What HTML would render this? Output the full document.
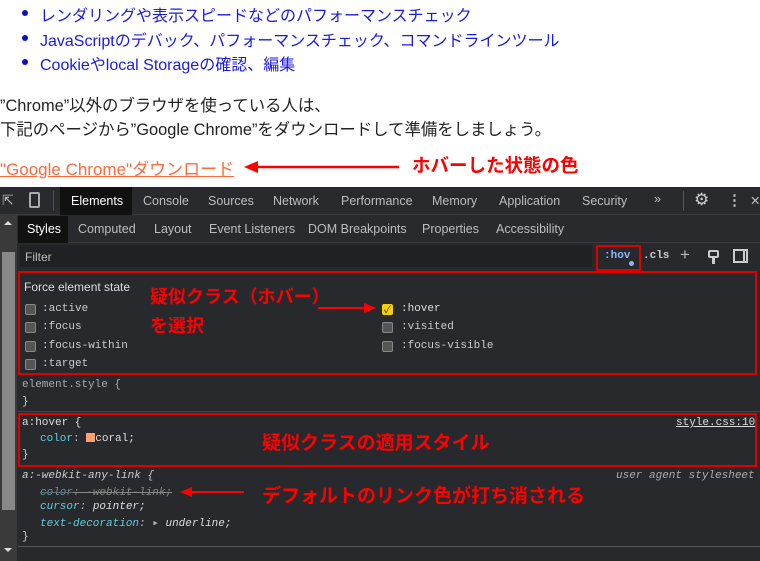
<!DOCTYPE html>
<html><head><meta charset="utf-8"><style>
*{margin:0;padding:0;box-sizing:border-box}
body{width:760px;height:561px;overflow:hidden;background:#fff;position:relative;font-family:"Liberation Sans","Noto Sans CJK JP",sans-serif}
.a{position:absolute;white-space:nowrap}
.blue{color:#1a1ae6;font-size:16px}
.dot{position:absolute;width:6px;height:6px;border-radius:3px;background:#1010c0}
.blk{color:#222;font-size:16.4px}
.red{color:#f00;font-weight:bold;font-family:"Noto Sans CJK JP",sans-serif}
.dt{position:absolute;left:0;top:187px;width:760px;height:374px;background:#28292d}
.m{font-family:"Liberation Mono","DejaVu Sans Mono",monospace;font-size:11px}
.g{color:#b8b8b8}
.tab{color:#bdbdbd;font-size:12.5px}
.cb{position:absolute;width:11px;height:11px;border:1px solid #888;background:#555;border-radius:2px}
.rb{position:absolute;border:2px solid #e00000}
.cy{color:#5fd0d8}
</style></head><body>
<div class="dot" style="left:22px;top:10px"></div><div class="a blue" style="left:40px;top:2px">レンダリングや表示スピードなどのパフォーマンスチェック</div>
<div class="dot" style="left:22px;top:35px"></div><div class="a blue" style="left:40px;top:27px">JavaScriptのデバック、パフォーマンスチェック、コマンドラインツール</div>
<div class="dot" style="left:22px;top:59px"></div><div class="a blue" style="left:40px;top:51px">Cookieやlocal Storageの確認、編集</div>
<div class="a blk" style="left:0;top:92px">”Chrome”以外のブラウザを使っている人は、</div>
<div class="a blk" style="left:0;top:116px">下記のページから”Google Chrome”をダウンロードして準備をしましょう。</div>
<div class="a" style="left:0;top:155px;font-size:17px;color:#ff6a3d;text-decoration:underline">"Google Chrome"ダウンロード</div>
<svg class="a" style="left:244px;top:160px" width="160" height="14"><line x1="8" y1="7" x2="155" y2="7" stroke="#f00" stroke-width="2.5"/><polygon points="0,7 14,1 14,13" fill="#f00"/></svg>
<div class="a red" style="left:412px;top:152px;font-size:18.5px">ホバーした状態の色</div>

<div class="dt"></div>
<div class="a" style="left:0;top:187px;width:760px;height:28px;background:#292a2d;border-bottom:1px solid #3c3c3c"></div>
<div class="a" style="left:60px;top:187px;width:72px;height:28px;background:#111"></div>
<div class="a g" style="left:2px;top:192px;font-size:14px">⇱</div>
<div class="a" style="left:29px;top:192px;width:11px;height:16px;border:2px solid #aaa;border-radius:2px"></div>
<div class="a" style="left:53px;top:191px;width:1px;height:20px;background:#555"></div>
<div class="a tab" style="left:71px;top:194px;color:#fff">Elements</div>
<div class="a tab" style="left:143px;top:194px">Console</div>
<div class="a tab" style="left:208px;top:194px">Sources</div>
<div class="a tab" style="left:273px;top:194px">Network</div>
<div class="a tab" style="left:341px;top:194px">Performance</div>
<div class="a tab" style="left:432px;top:194px">Memory</div>
<div class="a tab" style="left:499px;top:194px">Application</div>
<div class="a tab" style="left:582px;top:194px">Security</div>
<div class="a tab" style="left:654px;top:192px">»</div>
<div class="a" style="left:683px;top:191px;width:1px;height:20px;background:#555"></div>
<div class="a tab" style="left:694px;top:190px;font-size:17px;color:#ccc">⚙</div>
<div class="a tab" style="left:727px;top:191px;font-size:15px;font-weight:bold">⋮</div>
<div class="a tab" style="left:750px;top:193px">✕</div>
<div class="a" style="left:0;top:215px;width:17px;height:346px;background:#3a3a3a"></div>
<div class="a" style="left:2px;top:252px;width:13px;height:258px;background:#888"></div>
<div class="a" style="left:4px;top:221px;width:0;height:0;border-left:4px solid transparent;border-right:4px solid transparent;border-bottom:4px solid #ddd"></div>
<div class="a" style="left:4px;top:548px;width:0;height:0;border-left:4px solid transparent;border-right:4px solid transparent;border-top:4px solid #ddd"></div>
<div class="a" style="left:17px;top:215px;width:743px;height:28px;background:#292a2d;border-bottom:1px solid #3c3c3c"></div>
<div class="a" style="left:18px;top:216px;width:50px;height:27px;background:#111"></div>
<div class="a tab" style="left:27px;top:222px;color:#fff">Styles</div>
<div class="a tab" style="left:78px;top:222px">Computed</div>
<div class="a tab" style="left:154px;top:222px">Layout</div>
<div class="a tab" style="left:209px;top:222px">Event Listeners</div>
<div class="a tab" style="left:308px;top:222px">DOM Breakpoints</div>
<div class="a tab" style="left:422px;top:222px">Properties</div>
<div class="a tab" style="left:496px;top:222px">Accessibility</div>
<div class="a" style="left:20px;top:245px;width:572px;height:22px;background:#202124"></div>
<div class="a tab" style="left:25px;top:250px;font-size:12px">Filter</div>
<div class="a m cy" style="left:604px;top:250px;font-weight:bold;color:#8ab4f8">:hov</div>
<div class="a" style="left:629px;top:261px;width:5px;height:5px;border-radius:3px;background:#8ab4f8"></div>
<div class="rb" style="left:596px;top:245px;width:45px;height:26px"></div>
<div class="a m g" style="left:643px;top:250px;font-weight:bold;color:#ccc">.cls</div>
<div class="a g" style="left:680px;top:245px;font-size:17px">+</div>
<div class="a" style="left:708px;top:250px;width:11px;height:8px;border:2px solid #ccc;border-radius:2px"></div>
<div class="a" style="left:712px;top:258px;width:3px;height:6px;background:#ccc"></div>
<div class="a" style="left:733px;top:249px;width:15px;height:14px;border:2px solid #ccc"></div>
<div class="a" style="left:743px;top:249px;width:2px;height:14px;background:#ccc"></div>
<div class="rb" style="left:18px;top:271px;width:739px;height:104px"></div>
<div class="a tab" style="left:24px;top:280px;font-size:12px;color:#ddd">Force element state</div>
<div class="cb" style="left:25px;top:304px"></div><div class="a m g" style="left:42px;top:303px;color:#ccc">:active</div>
<div class="cb" style="left:25px;top:322px"></div><div class="a m g" style="left:42px;top:321px;color:#ccc">:focus</div>
<div class="cb" style="left:25px;top:341px"></div><div class="a m g" style="left:42px;top:340px;color:#ccc">:focus-within</div>
<div class="cb" style="left:25px;top:359px"></div><div class="a m g" style="left:42px;top:358px;color:#ccc">:target</div>
<div class="cb" style="left:382px;top:304px;background:#f5d000;border-color:#f5d000"></div><div class="a" style="left:384px;top:301px;font-size:10px;color:#333">✓</div><div class="a m" style="left:401px;top:303px;color:#ddd">:hover</div>
<div class="cb" style="left:382px;top:322px"></div><div class="a m" style="left:401px;top:321px;color:#ccc">:visited</div>
<div class="cb" style="left:382px;top:341px"></div><div class="a m" style="left:401px;top:340px;color:#ccc">:focus-visible</div>
<div class="a red" style="left:150px;top:283px;font-size:18px">疑似クラス（ホバー）</div>
<div class="a red" style="left:150px;top:312px;font-size:18px">を選択</div>
<svg class="a" style="left:318px;top:302px" width="58" height="12"><line x1="0" y1="6" x2="48" y2="6" stroke="#f00" stroke-width="2"/><polygon points="58,6 46,1 46,11" fill="#f00"/></svg>
<div class="a m" style="left:22px;top:379px;color:#aaa">element.style {</div>
<div class="a m" style="left:22px;top:396px;color:#ccc">}</div>
<div class="a" style="left:18px;top:411px;width:742px;height:1px;background:#444"></div>
<div class="rb" style="left:18px;top:413px;width:739px;height:54px"></div>
<div class="a m" style="left:22px;top:417px;color:#ddd">a:hover {</div>
<div class="a m" style="left:676px;top:417px;color:#ddd;text-decoration:underline">style.css:10</div>
<div class="a m" style="left:40px;top:433px"><span class="cy">color</span><span class="g">: </span><span style="display:inline-block;width:9px;height:9px;background:#ff9f6a;vertical-align:-1px"></span><span style="color:#ddd">coral;</span></div>
<div class="a m" style="left:22px;top:449px;color:#ccc">}</div>
<div class="a red" style="left:262px;top:428px;font-size:19px">疑似クラスの適用スタイル</div>
<div class="a m" style="left:22px;top:470px;color:#ccc;font-style:italic">a:-webkit-any-link {</div>
<div class="a m" style="left:616px;top:470px;color:#aaa;font-style:italic">user agent stylesheet</div>
<div class="a m" style="left:40px;top:487px;font-style:italic;text-decoration:line-through;color:#888"><span class="cy" style="opacity:.7">color</span>: -webkit-link;</div>
<div class="a m" style="left:40px;top:501px;font-style:italic"><span class="cy">cursor</span><span class="g">: </span><span style="color:#ddd">pointer;</span></div>
<div class="a m" style="left:40px;top:516px;font-style:italic"><span class="cy">text-decoration</span><span class="g">: ▸ </span><span style="color:#ddd">underline;</span></div>
<div class="a m" style="left:22px;top:531px;color:#ccc">}</div>
<div class="a" style="left:18px;top:546px;width:742px;height:1px;background:#555"></div>
<svg class="a" style="left:180px;top:486px" width="65" height="12"><line x1="10" y1="6" x2="64" y2="6" stroke="#f00" stroke-width="2"/><polygon points="0,6 12,1 12,11" fill="#f00"/></svg>
<div class="a red" style="left:262px;top:481px;font-size:19px">デフォルトのリンク色が打ち消される</div>
</body></html>
